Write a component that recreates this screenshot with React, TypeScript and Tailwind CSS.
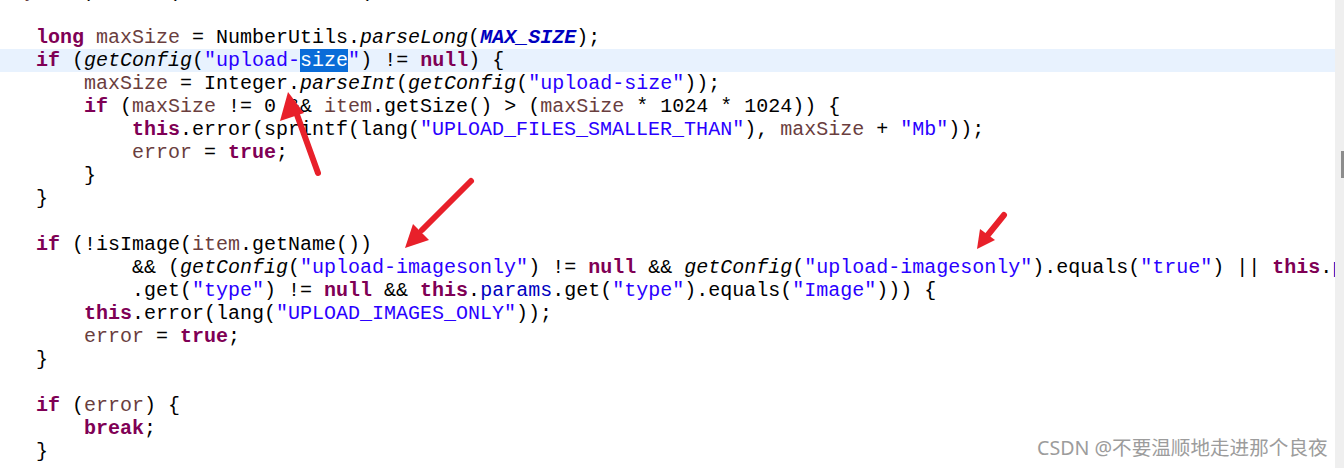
import type { ReactNode } from "react";

const K = ({ children }: { children: ReactNode }) => (
	<span className="font-bold text-[#7f0055]">{children}</span>
);
const V = ({ children }: { children: ReactNode }) => (
	<span className="text-[#6a3e3e]">{children}</span>
);
const S = ({ children }: { children: ReactNode }) => (
	<span className="text-[#2a00ff]">{children}</span>
);
const I = ({ children }: { children: ReactNode }) => <span className="italic">{children}</span>;
const F = ({ children }: { children: ReactNode }) => (
	<span className="text-[#0000c0]">{children}</span>
);
const C = ({ children }: { children: ReactNode }) => (
	<span className="font-bold italic text-[#0000c0]">{children}</span>
);

function Line({ children, active }: { children?: ReactNode; active?: boolean }) {
	return (
		<div className={`h-[23px] leading-[23px] whitespace-pre pl-[36px] ${active ? "bg-[#e8f2fe]" : ""}`}>
			{children}
		</div>
	);
}

function Arrows() {
	return (
		<svg className="absolute inset-0 pointer-events-none" width={1344} height={468}>
			<g stroke="#e8202a" strokeWidth={6} strokeLinecap="round" fill="#e8202a">
				<line x1={318} y1={173} x2={296} y2={112} />
				<line x1={471} y1={181} x2={422} y2={230} />
				<line x1={1004} y1={215} x2={987} y2={236} />
			</g>
			<g fill="#e8202a">
				<polygon points="288,92 280,121 304,113" />
				<polygon points="405,248 413,224 429,240" />
				<polygon points="977,249 980,229 995,240" />
			</g>
		</svg>
	);
}

export default function App() {
	return (
		<div className="relative w-[1344px] h-[468px] overflow-hidden bg-white flex text-black">
			<div
				className="w-[1335px] shrink-0 overflow-hidden mt-[-20px] text-[20px]"
				style={{ fontFamily: '"Liberation Mono", monospace' }}
			>
				<div className="h-[23px] leading-[23px] whitespace-pre pl-[24px]">
					<V>y</V>{"    )      (               ("}
				</div>
				<Line />
				<Line>
					<K>long</K> <V>maxSize</V> = NumberUtils.<I>parseLong</I>(<C>MAX_SIZE</C>);
				</Line>
				<Line active>
					<K>if</K> (<I>getConfig</I>(<S>
						"upload-<span className="bg-[#0a6cd8] text-white">size</span>"
					</S>) != <K>null</K>) {"{"}
				</Line>
				<Line>
					{"    "}
					<V>maxSize</V> = Integer.<I>parseInt</I>(<I>getConfig</I>(<S>"upload-size"</S>));
				</Line>
				<Line>
					{"    "}
					<K>if</K> (<V>maxSize</V> != 0 && <V>item</V>.getSize() {">"} (<V>maxSize</V> * 1024 * 1024)) {"{"}
				</Line>
				<Line>
					{"        "}
					<K>this</K>.error(sprintf(lang(<S>"UPLOAD_FILES_SMALLER_THAN"</S>), <V>maxSize</V> + <S>"Mb"</S>));
				</Line>
				<Line>
					{"        "}
					<V>error</V> = <K>true</K>;
				</Line>
				<Line>{"    }"}</Line>
				<Line>{"}"}</Line>
				<Line />
				<Line>
					<K>if</K> (!isImage(<V>item</V>.getName())
				</Line>
				<Line>
					{"        && ("}
					<I>getConfig</I>(<S>"upload-imagesonly"</S>) != <K>null</K> && <I>getConfig</I>(
					<S>"upload-imagesonly"</S>).equals(<S>"true"</S>) || <K>this</K>.<F>params</F>
				</Line>
				<Line>
					{"        .get("}
					<S>"type"</S>) != <K>null</K> && <K>this</K>.<F>params</F>.get(<S>"type"</S>).equals(
					<S>"Image"</S>))) {"{"}
				</Line>
				<Line>
					{"    "}
					<K>this</K>.error(lang(<S>"UPLOAD_IMAGES_ONLY"</S>));
				</Line>
				<Line>
					{"    "}
					<V>error</V> = <K>true</K>;
				</Line>
				<Line>{"}"}</Line>
				<Line />
				<Line>
					<K>if</K> (<V>error</V>) {"{"}
				</Line>
				<Line>
					{"    "}
					<K>break</K>;
				</Line>
				<Line>{"}"}</Line>
			</div>
			<div className="w-[9px] shrink-0 bg-[#efefef] flex flex-col items-end">
				<div className="mt-[151px] h-[27px] w-[3px] bg-[#8c8c8c]" />
			</div>
			<Arrows />
			<div
				className="absolute left-[1037px] top-[436px] text-[19.6px] leading-[24px] text-[#9c9c9c] whitespace-nowrap"
				style={{ fontFamily: '"Noto Sans", "Noto Sans CJK SC", sans-serif' }}
			>
				CSDN @不要温顺地走进那个良夜
			</div>
		</div>
	);
}
